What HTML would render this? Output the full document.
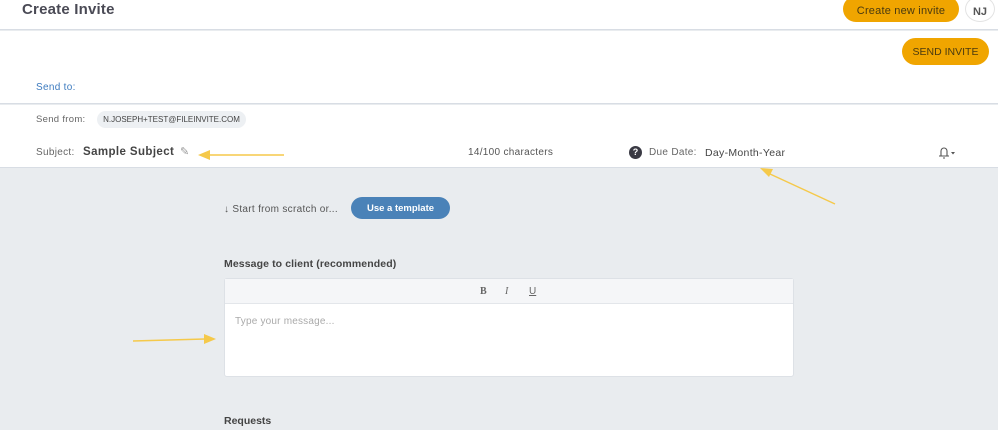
<!DOCTYPE html>
<html><head><meta charset="utf-8"><style>
*{box-sizing:border-box;margin:0;padding:0}
body{width:998px;height:430px;overflow:hidden;background:#e9ecef;font-family:"Liberation Sans",sans-serif;position:relative;color:#444}
.abs{position:absolute;white-space:nowrap}
.white{position:absolute;left:0;width:998px;background:#fff}
.btn{position:absolute;background:#f0a500;border-radius:16px;color:#4a3a10;font-size:11px;text-align:center}
</style></head><body>
<div class="white" style="top:0;height:30px;border-bottom:1px solid #d8dde4"></div>
<div class="white" style="top:31px;height:73px;border-bottom:1px solid #d8dde4"></div>
<div class="white" style="top:105px;height:63px;border-bottom:1px solid #d8dde4"></div>
<div class="abs" style="left:22px;top:1px;font-size:15px;font-weight:bold;color:#4a4a55;letter-spacing:0.2px">Create Invite</div>
<div class="btn" style="left:843px;top:-4px;width:116px;height:26px;line-height:30px;letter-spacing:0.2px">Create new invite</div>
<div class="abs" style="left:965px;top:-4px;width:30px;height:26px;border:1px solid #e3e3e3;border-radius:50%;font-size:11px;font-weight:bold;text-align:center;line-height:30px;color:#555">NJ</div>
<div class="btn" style="left:902px;top:38px;width:87px;height:27px;line-height:29px;font-size:10.5px">SEND INVITE</div>
<div class="abs" style="left:36px;top:82px;font-size:10px;color:#3d7bbf;letter-spacing:0.3px">Send to:</div>
<div class="abs" style="left:36px;top:114px;font-size:9.5px;color:#666;letter-spacing:0.3px">Send from:</div>
<div class="abs" style="left:97px;top:111px;width:149px;height:17px;background:#edf0f3;border-radius:9px;font-size:8px;line-height:17px;text-align:center;color:#444">N.JOSEPH+TEST@FILEINVITE.COM</div>
<div class="abs" style="left:36px;top:147px;font-size:10px;color:#666;letter-spacing:0.3px">Subject:</div>
<div class="abs" style="left:83px;top:146px;font-size:11.5px;font-weight:bold;color:#444;letter-spacing:0.4px">Sample Subject</div>
<div class="abs" style="left:180px;top:145px;font-size:11px;color:#999">✎</div>
<div class="abs" style="left:468px;top:147px;font-size:10px;color:#555;letter-spacing:0.3px">14/100 characters</div>
<div class="abs" style="left:629px;top:146px;width:13px;height:13px;border-radius:50%;background:#3a3a44;color:#fff;font-size:9px;font-weight:bold;text-align:center;line-height:13px">?</div>
<div class="abs" style="left:649px;top:147px;font-size:10px;color:#666;letter-spacing:0.3px">Due Date:</div>
<div class="abs" style="left:705px;top:147px;font-size:10.5px;color:#444;letter-spacing:0.3px">Day-Month-Year</div>
<svg class="abs" style="left:936px;top:144px" width="22" height="16"><path d="M3 12h10M5 12V7a3 3 0 0 1 6 0v5M7 14h2" stroke="#555" fill="none" stroke-width="1.1"/><path d="M15 8h4l-2 2.5z" fill="#555"/></svg>
<div class="abs" style="left:224px;top:204px;font-size:10px;color:#555;letter-spacing:0.3px">↓ Start from scratch or...</div>
<div class="abs" style="left:351px;top:197px;width:99px;height:22px;border-radius:11px;background:#4a82b8;color:#fff;font-size:9.5px;font-weight:bold;text-align:center;line-height:23px">Use a template</div>
<div class="abs" style="left:224px;top:258px;font-size:10.5px;font-weight:bold;color:#444;letter-spacing:0.1px">Message to client (recommended)</div>
<div class="abs" style="left:224px;top:278px;width:570px;height:99px;background:#fff;border:1px solid #dde1e6;border-radius:3px"></div>
<div class="abs" style="left:225px;top:279px;width:568px;height:25px;background:#f5f6f8;border-bottom:1px solid #e3e6ea"></div>
<div class="abs" style="left:480px;top:286px;font-size:10px;color:#666;font-family:'Liberation Serif',serif;font-weight:bold">B</div>
<div class="abs" style="left:505px;top:286px;font-size:10px;color:#666;font-family:'Liberation Serif',serif;font-style:italic">I</div>
<div class="abs" style="left:529px;top:286px;font-size:10px;color:#666;text-decoration:underline">U</div>
<div class="abs" style="left:235px;top:316px;font-size:10px;color:#aaa;letter-spacing:0.2px">Type your message...</div>
<div class="abs" style="left:224px;top:415px;font-size:10.5px;font-weight:bold;color:#444">Requests</div>
<svg class="abs" style="left:0;top:0" width="998" height="430">
<g stroke="#f5c94a" stroke-width="1.5" fill="#f5c94a">
<line x1="284" y1="155" x2="208" y2="155"/><path d="M198 155l12-5v10z" stroke="none"/>
<line x1="835" y1="204" x2="770" y2="174"/><path d="M760 168l13 1-4 8z" stroke="none"/>
<line x1="133" y1="341" x2="205" y2="339"/><path d="M216 339l-12-5v10z" stroke="none"/>
</g></svg>
</body></html>
